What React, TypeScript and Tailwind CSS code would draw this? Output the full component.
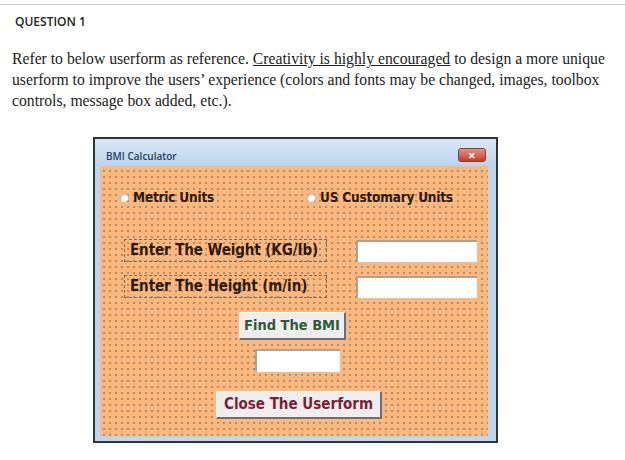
import React from "react";

const dots =
  "bg-[#fdb97d] bg-[radial-gradient(circle,#b38a68_0.9px,transparent_1.4px)] bg-[length:6px_6px] bg-[position:1px_2px]";

const formFont = { fontFamily: '"DejaVu Sans Condensed", "DejaVu Sans", sans-serif', fontStretch: "condensed" as const };

function Radio({ label }: { label: string }) {
  return (
    <div className="h-[14px] flex items-center gap-[4px]">
      <span className="w-[10px] h-[10px] rounded-full bg-white border border-[#c9b9a6] shadow-[inset_1px_1px_1px_#bbb]" />
      <span className="text-[13.5px] leading-none font-bold text-[#2a1a0c] tracking-[-0.2px]" style={formFont}>
        {label}
      </span>
    </div>
  );
}

function FieldRow({ label }: { label: string }) {
  return (
    <div className="flex items-center">
      <div
        className="ml-[24px] w-[203px] h-[23px] border border-dashed border-[#7d6a55] flex items-center pl-[5px] text-[15px] leading-none font-bold text-[#2a1a0c] tracking-[-0.1px]"
        style={formFont}
      >
        {label}
      </div>
      <div className="ml-[29px] w-[121px] h-[22px] bg-white border-t-2 border-l-2 border-[#a3a3a3]" />
    </div>
  );
}

export default function App() {
  return (
    <div className="w-[625px] h-[460px] bg-white overflow-hidden">
      <div className="mt-[4px] h-px bg-[#cfcfcf]" />
      <div className="pl-[15px] pt-[8px] text-[12px] font-semibold text-[#222]" style={{ fontFamily: '"Open Sans", sans-serif' }}>
        QUESTION 1
      </div>
      <p
        className="mt-[17px] pl-[12px] pr-[10px] text-[15.7px] leading-[21px] text-[#222]"
        style={{ fontFamily: '"Liberation Serif", serif' }}
      >
        Refer to below userform as reference. <span className="underline">Creativity is highly encouraged</span> to design a
        more unique userform to improve the users’ experience (colors and fonts may be changed, images, toolbox controls,
        message box added, etc.).
      </p>

      <div className="mt-[26px] ml-[93px] w-[405px] h-[306px] border-2 border-[#2f3439] bg-[#bcd6ee] flex flex-col">
        <div className="h-[27px] flex items-start justify-between pl-[11px] pr-[10px] bg-gradient-to-b from-[#dbe8f6] to-[#bad4ee]">
          <span className="mt-[12px] text-[10px] leading-none font-semibold text-[#2b3e63]" style={{ fontFamily: '"Open Sans", sans-serif' }}>
            BMI Calculator
          </span>
          <span className="mt-[9px] w-[28px] h-[14px] rounded-[3px] bg-gradient-to-b from-[#e8917f] to-[#c23a2b] border border-[#8e3a30] flex items-center justify-center text-white text-[9px] font-bold leading-none">
            ✕
          </span>
        </div>
        <div className={`ml-[5px] mr-[8px] mb-[5px] flex-1 flex flex-col ${dots}`}>
          <div className="mt-[25px] flex items-center">
            <div className="ml-[19px]">
              <Radio label="Metric Units" />
            </div>
            <div className="ml-[92px]">
              <Radio label="US Customary Units" />
            </div>
          </div>
          <div className="mt-[34px]">
            <FieldRow label="Enter The Weight (KG/Ib)" />
          </div>
          <div className="mt-[13px]">
            <FieldRow label="Enter The Height (m/in)" />
          </div>
          <div
            className="mt-[14px] ml-[139px] w-[107px] h-[28px] bg-[#eeeeee] border-b-2 border-r-2 border-[#6d6d6d] border-t border-l border-t-white border-l-white flex items-center justify-center text-[14.5px] leading-none font-bold text-[#2f5a34]"
            style={formFont}
          >
            Find The BMI
          </div>
          <div className="mt-[9px] ml-[155px] w-[85px] h-[23px] bg-white border-t-2 border-l-2 border-[#a3a3a3]" />
          <div
            className="mt-[19px] ml-[116px] w-[166px] h-[28px] bg-[#eeeeee] border-b-2 border-r-2 border-[#6d6d6d] border-t border-l border-t-white border-l-white flex items-center justify-center text-[15px] leading-none font-bold text-[#7e1f35]"
            style={formFont}
          >
            Close The Userform
          </div>
        </div>
      </div>
    </div>
  );
}
